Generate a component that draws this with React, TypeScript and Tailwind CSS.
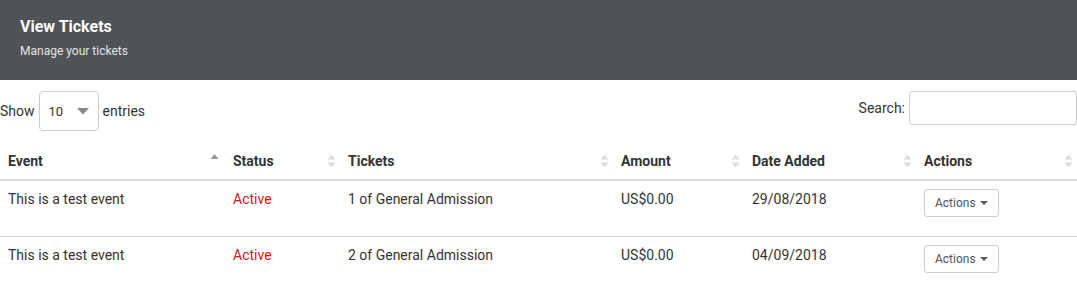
import React from "react";

type Ticket = { event: string; status: string; tickets: string; amount: string; date: string };

const rows: Ticket[] = [
  { event: "This is a test event", status: "Active", tickets: "1 of General Admission", amount: "US$0.00", date: "29/08/2018" },
  { event: "This is a test event", status: "Active", tickets: "2 of General Admission", amount: "US$0.00", date: "04/09/2018" },
];

function SortIcon({ mode }: { mode: "asc" | "both" }) {
  if (mode === "asc") {
    return (
      <svg width="9" height="14" viewBox="0 0 9 14" className="absolute right-[6px] top-[13px]">
        <path d="M0.5 6 L4.5 1 L8.5 6 Z" fill="#999" />
      </svg>
    );
  }
  return (
    <svg width="9" height="16" viewBox="0 0 9 16" className="absolute right-[4px] top-[13px]">
      <path d="M0.5 6.5 L4.5 1.5 L8.5 6.5 Z" fill="#ddd" />
      <path d="M0.5 9.5 L4.5 14.5 L8.5 9.5 Z" fill="#ddd" />
    </svg>
  );
}

const cols = [
  { label: "Event", w: "w-[225px]", sort: "asc" as const },
  { label: "Status", w: "w-[115px]", sort: "both" as const },
  { label: "Tickets", w: "w-[273px]", sort: "both" as const },
  { label: "Amount", w: "w-[131px]", sort: "both" as const },
  { label: "Date Added", w: "w-[172px]", sort: "both" as const },
  { label: "Actions", w: "w-[161px]", sort: "both" as const },
];

export default function App() {
  return (
    <div className="w-[1077px] h-[282px] overflow-hidden bg-white text-[#333] font-['Roboto',sans-serif] text-[14px]">
      <div className="h-[80px] bg-[#4f5356] px-[20px] pt-[16px]">
        <h1 className="text-white font-bold text-[16px] leading-[22px]">View Tickets</h1>
        <p className="text-[#e2e4e6] text-[12px] leading-[16px] mt-[5px]">Manage your tickets</p>
      </div>

      <div className="flex items-start justify-between mt-[11px]">
        <div className="flex items-center">
          <span>Show</span>
          <div className="ml-[4px] mr-[4px] w-[60px] h-[40px] border border-[#ccc] rounded-[4px] flex items-center pl-[9px] pr-[9px] justify-between">
            <span className="text-[13px] pt-[2px]">10</span>
            <svg width="12" height="7" viewBox="0 0 12 7">
              <path d="M0 0 L12 0 L6 6.5 Z" fill="#888" />
            </svg>
          </div>
          <span>entries</span>
        </div>
        <div className="flex items-center">
          <span className="mr-[4px]">Search:</span>
          <div className="w-[168px] h-[34px] border border-[#ccc] rounded-[3px]" />
        </div>
      </div>

      <table className="mt-[9px] border-collapse table-fixed w-[1077px]">
        <thead>
          <tr className="border-b-2 border-[#ddd]">
            {cols.map((c) => (
              <th key={c.label} className={`${c.w} relative text-left font-bold pl-[8px] h-[40px] pt-[3px] align-middle`}>
                {c.label}
                <SortIcon mode={c.sort} />
              </th>
            ))}
          </tr>
        </thead>
        <tbody>
          {rows.map((r, i) => (
            <tr key={i} className={i === 0 ? "border-b border-[#ddd]" : ""}>
              <td className="pl-[8px] align-top pt-[8px] h-[56px]">{r.event}</td>
              <td className="pl-[8px] align-top pt-[8px] text-[#e01010]">{r.status}</td>
              <td className="pl-[8px] align-top pt-[8px]">{r.tickets}</td>
              <td className="pl-[8px] align-top pt-[8px]">{r.amount}</td>
              <td className="pl-[8px] align-top pt-[8px]">{r.date}</td>
              <td className="pl-[8px] align-top pt-[8px]">
                <button className="h-[28px] px-[10px] border border-[#ccc] rounded-[3px] bg-white text-[12px] text-[#555] flex items-center gap-[4px]">
                  Actions
                  <svg width="8" height="4" viewBox="0 0 8 4">
                    <path d="M0 0 L8 0 L4 4 Z" fill="#555" />
                  </svg>
                </button>
              </td>
            </tr>
          ))}
        </tbody>
      </table>
    </div>
  );
}
